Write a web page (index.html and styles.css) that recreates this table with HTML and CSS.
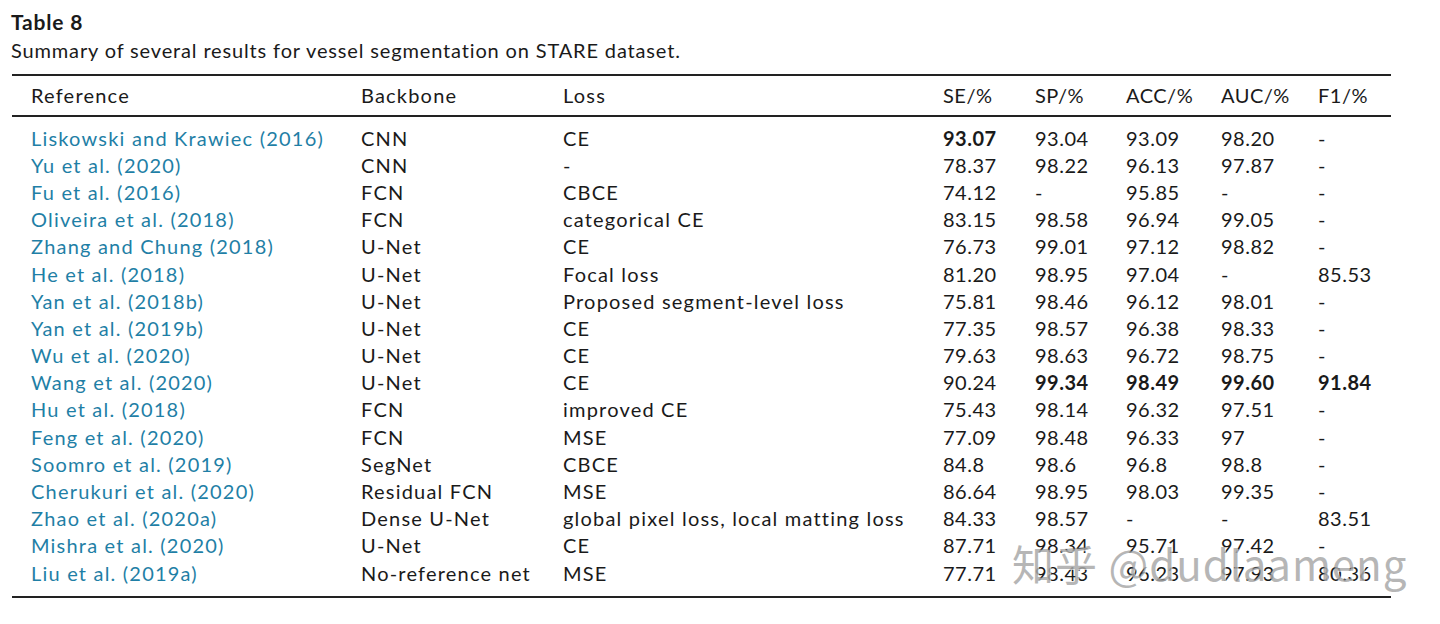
FILE: index.html
```html
<!DOCTYPE html>
<html lang="en">
<head>
<meta charset="utf-8">
<title>Table 8</title>
<link rel="stylesheet" href="styles.css">
</head>
<body>
<div class="page">
  <div class="title">Table 8</div>
  <div class="caption">Summary of several results for vessel segmentation on STARE dataset.</div>
  <div class="table">
    <div class="row head">
      <div>Reference</div><div>Backbone</div><div>Loss</div><div class="n">SE/%</div><div class="n">SP/%</div><div class="n">ACC/%</div><div class="n">AUC/%</div><div class="n">F1/%</div>
    </div>
    <div class="body">
      <div class="row"><div class="ref">Liskowski and Krawiec (2016)</div><div>CNN</div><div>CE</div><div class="n b">93.07</div><div class="n">93.04</div><div class="n">93.09</div><div class="n">98.20</div><div class="n">-</div></div>
      <div class="row"><div class="ref">Yu et al. (2020)</div><div>CNN</div><div>-</div><div class="n">78.37</div><div class="n">98.22</div><div class="n">96.13</div><div class="n">97.87</div><div class="n">-</div></div>
      <div class="row"><div class="ref">Fu et al. (2016)</div><div>FCN</div><div>CBCE</div><div class="n">74.12</div><div class="n">-</div><div class="n">95.85</div><div class="n">-</div><div class="n">-</div></div>
      <div class="row"><div class="ref">Oliveira et al. (2018)</div><div>FCN</div><div>categorical CE</div><div class="n">83.15</div><div class="n">98.58</div><div class="n">96.94</div><div class="n">99.05</div><div class="n">-</div></div>
      <div class="row"><div class="ref">Zhang and Chung (2018)</div><div>U-Net</div><div>CE</div><div class="n">76.73</div><div class="n">99.01</div><div class="n">97.12</div><div class="n">98.82</div><div class="n">-</div></div>
      <div class="row"><div class="ref">He et al. (2018)</div><div>U-Net</div><div>Focal loss</div><div class="n">81.20</div><div class="n">98.95</div><div class="n">97.04</div><div class="n">-</div><div class="n">85.53</div></div>
      <div class="row"><div class="ref">Yan et al. (2018b)</div><div>U-Net</div><div>Proposed segment-level loss</div><div class="n">75.81</div><div class="n">98.46</div><div class="n">96.12</div><div class="n">98.01</div><div class="n">-</div></div>
      <div class="row"><div class="ref">Yan et al. (2019b)</div><div>U-Net</div><div>CE</div><div class="n">77.35</div><div class="n">98.57</div><div class="n">96.38</div><div class="n">98.33</div><div class="n">-</div></div>
      <div class="row"><div class="ref">Wu et al. (2020)</div><div>U-Net</div><div>CE</div><div class="n">79.63</div><div class="n">98.63</div><div class="n">96.72</div><div class="n">98.75</div><div class="n">-</div></div>
      <div class="row"><div class="ref">Wang et al. (2020)</div><div>U-Net</div><div>CE</div><div class="n">90.24</div><div class="n b">99.34</div><div class="n b">98.49</div><div class="n b">99.60</div><div class="n b">91.84</div></div>
      <div class="row"><div class="ref">Hu et al. (2018)</div><div>FCN</div><div>improved CE</div><div class="n">75.43</div><div class="n">98.14</div><div class="n">96.32</div><div class="n">97.51</div><div class="n">-</div></div>
      <div class="row"><div class="ref">Feng et al. (2020)</div><div>FCN</div><div>MSE</div><div class="n">77.09</div><div class="n">98.48</div><div class="n">96.33</div><div class="n">97</div><div class="n">-</div></div>
      <div class="row"><div class="ref">Soomro et al. (2019)</div><div>SegNet</div><div>CBCE</div><div class="n">84.8</div><div class="n">98.6</div><div class="n">96.8</div><div class="n">98.8</div><div class="n">-</div></div>
      <div class="row"><div class="ref">Cherukuri et al. (2020)</div><div>Residual FCN</div><div>MSE</div><div class="n">86.64</div><div class="n">98.95</div><div class="n">98.03</div><div class="n">99.35</div><div class="n">-</div></div>
      <div class="row"><div class="ref">Zhao et al. (2020a)</div><div>Dense U-Net</div><div>global pixel loss, local matting loss</div><div class="n">84.33</div><div class="n">98.57</div><div class="n">-</div><div class="n">-</div><div class="n">83.51</div></div>
      <div class="row"><div class="ref">Mishra et al. (2020)</div><div>U-Net</div><div>CE</div><div class="n">87.71</div><div class="n">98.34</div><div class="n">95.71</div><div class="n">97.42</div><div class="n">-</div></div>
      <div class="row"><div class="ref">Liu et al. (2019a)</div><div>No-reference net</div><div>MSE</div><div class="n">77.71</div><div class="n">98.43</div><div class="n">96.23</div><div class="n">97.93</div><div class="n">80.36</div></div>
    </div>
  </div>
  <div class="watermark">知乎 @dudlaameng</div>
</div>
</body>
</html>
```

FILE: styles.css
```css
html, body {
  margin: 0;
  padding: 0;
  background: #ffffff;
}
.page {
  position: relative;
  width: 1440px;
  height: 624px;
  padding: 8px 0 0 11px;
  box-sizing: border-box;
  font-family: Lato, "Noto Sans", sans-serif;
  color: #1a1a1a;
}
.title {
  font-weight: bold;
  font-size: 21px;
  line-height: 28px;
  letter-spacing: 0.8px;
}
.caption {
  font-size: 20px;
  line-height: 29px;
  letter-spacing: 0.85px;
}
.table {
  width: 1379px;
  margin-top: 9px;
  margin-left: 1px;
  border-top: 2px solid #222;
  border-bottom: 2px solid #222;
  font-size: 20px;
  letter-spacing: 1.2px;
}
.row {
  display: grid;
  grid-template-columns: 349px 202px 380px 92px 91px 95px 97px 72px;
  height: 27.2px;
  align-items: center;
  white-space: nowrap;
}
.row > div:first-child {
  padding-left: 19px;
}
.n {
  letter-spacing: 0.5px;
}
.head {
  height: 37px;
  padding-bottom: 2px;
  border-bottom: 2px solid #222;
}
.body {
  padding: 7px 0 10px;
}
.ref {
  color: #1f7fa6;
}
.b {
  font-weight: bold;
}
.watermark {
  position: absolute;
  left: 1012px;
  top: 536px;
  font-family: "Noto Sans CJK SC", "Noto Sans", sans-serif;
  font-size: 42px;
  line-height: 54px;
  color: rgba(110, 110, 110, 0.5);
  text-shadow: 1px 1px 0 rgba(255, 255, 255, 0.7);
  white-space: nowrap;
  letter-spacing: 1px;
}
```
